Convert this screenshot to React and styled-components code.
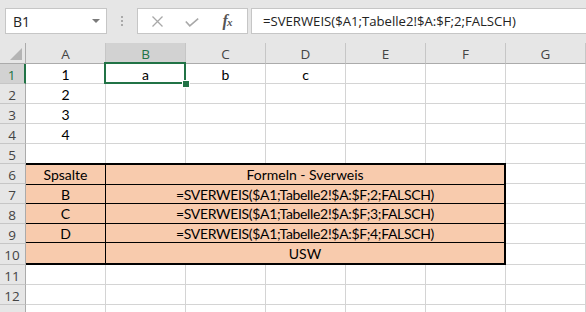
import React from 'react';
import styled, { createGlobalStyle, css } from 'styled-components';

const GlobalStyle = createGlobalStyle`
  html, body { margin: 0; padding: 0; background: #fff; overflow: hidden; }
  body { width: 586px; height: 312px; }
  * { box-sizing: border-box; }
`;

const Window = styled.div`
  width: 586px;
  height: 312px;
  overflow: hidden;
  background: #fff;
`;

const FormulaBar = styled.div`
  height: 43px;
  background: #e6e6e6;
  display: flex;
  align-items: flex-start;
  padding: 8px 0 0 5px;
`;

const NameBox = styled.div`
  width: 102px;
  height: 26px;
  border: 1px solid #c6c6c6;
  background: #fff;
  display: flex;
  align-items: center;
  justify-content: space-between;
  padding: 0 6px 0 7px;
  font-family: "Open Sans", "Noto Sans", sans-serif;
  font-size: 14px;
  color: #222;
`;

const DropArrow = styled.span`
  width: 0;
  height: 0;
  border-left: 4px solid transparent;
  border-right: 4px solid transparent;
  border-top: 4px solid #7a7a7a;
`;

const Grip = styled.div`
  width: 30px;
  height: 26px;
  display: flex;
  flex-direction: column;
  align-items: center;
  justify-content: center;
  gap: 2px;
`;

const GripDot = styled.span`
  width: 2px;
  height: 2px;
  background: #aaaaaa;
`;

const FxBox = styled.div`
  width: 111px;
  height: 26px;
  border: 1px solid #c6c6c6;
  background: #fff;
  display: flex;
  align-items: center;
  padding-left: 9px;
  gap: 15px;
`;

const IconSlot = styled.span`
  width: 20px;
  height: 24px;
  display: flex;
  align-items: center;
  justify-content: center;
  padding-top: ${(p) => p.$drop || 0}px;
`;

const Fx = styled.span`
  font-family: "Liberation Serif", serif;
  font-style: italic;
  font-weight: bold;
  color: #555;
  font-size: 16px;
  letter-spacing: -1px;
  & small { font-size: 11px; }
`;

const FormulaInput = styled.div`
  flex: 1;
  height: 26px;
  margin-left: 3px;
  margin-right: -2px;
  border: 1px solid #c6c6c6;
  background: #fff;
  padding-left: 11px;
  display: flex;
  align-items: center;
  font-family: "Open Sans", "Noto Sans", sans-serif;
  font-size: 13.15px;
  color: #222;
  white-space: nowrap;
`;

const Sheet = styled.div`
  display: grid;
  grid-template-columns: 26px repeat(7, 80px);
  grid-template-rows: 21px repeat(9, 20px) 21px repeat(3, 20px);
  font-family: "Lato", "Liberation Sans", sans-serif;
`;

const Corner = styled.div`
  background: #e6e6e6;
  border-right: 1px solid #ababab;
  border-bottom: 1px solid #ababab;
  display: flex;
  align-items: flex-end;
  justify-content: flex-end;
  padding: 0 3px 3px 0;
`;

const CornerTriangle = styled.span`
  width: 0;
  height: 0;
  border-left: 12px solid transparent;
  border-bottom: 12px solid #b4b4b4;
`;

const ColHead = styled.div`
  background: #e6e6e6;
  border-right: 1px solid #c6c6c6;
  border-bottom: 1px solid #ababab;
  display: flex;
  align-items: center;
  justify-content: center;
  padding-top: 1px;
  font-family: "Open Sans", "Noto Sans", sans-serif;
  font-size: 13.5px;
  color: #444;
  ${(p) =>
    p.$active &&
    css`
      background: #d2d2d2;
      color: #217346;
    `}
`;

const RowHead = styled.div`
  background: #e6e6e6;
  border-right: 1px solid #ababab;
  border-bottom: 1px solid #c6c6c6;
  display: flex;
  align-items: center;
  justify-content: center;
  padding-top: 2px;
  padding-right: 1px;
  font-family: "Open Sans", "Noto Sans", sans-serif;
  font-size: 13.5px;
  color: #444;
  ${(p) =>
    p.$active &&
    css`
      background: #d2d2d2;
      color: #217346;
      border-right: 2px solid #217346;
    `}
`;

const Cell = styled.div`
  position: relative;
  border-right: 1px solid #d4d4d4;
  border-bottom: 1px solid #d4d4d4;
  display: flex;
  align-items: center;
  justify-content: center;
  padding-top: 2px;
  font-size: 14px;
  color: #000;
  ${(p) =>
    p.$selected &&
    css`
      z-index: 2;
      &::after {
        content: '';
        position: absolute;
        top: -2px;
        left: -2px;
        right: -1px;
        bottom: -1px;
        border: 2px solid #217346;
      }
      &::before {
        content: '';
        position: absolute;
        left: 76px;
        top: 16px;
        width: 6px;
        height: 6px;
        background: #217346;
        border: 1px solid #fff;
        z-index: 3;
      }
    `}
`;

const Table = styled.div`
  grid-column: 2 / 8;
  grid-row: 7 / 12;
  margin-top: -1px;
  border-top: 2px solid #000;
  border-bottom: 2px solid #000;
  border-right: 2px solid #000;
  background: #f8cbad;
  display: grid;
  grid-template-columns: 80px 1fr;
  grid-template-rows: repeat(5, 1fr);
  position: relative;
  z-index: 1;
`;

const TCell = styled.div`
  display: flex;
  align-items: center;
  justify-content: center;
  padding-top: 1px;
  font-size: 14px;
  letter-spacing: ${(p) => (p.$formula ? '-0.33px' : '0')};
  color: #000;
  white-space: nowrap;
  border-bottom: ${(p) => (p.$last ? 'none' : '1px solid #000')};
  border-right: ${(p) => (p.$first ? '1px solid #000' : 'none')};
`;

const COLS = ['A', 'B', 'C', 'D', 'E', 'F', 'G'];

const topRows = [
  ['1', 'a', 'b', 'c', '', '', ''],
  ['2', '', '', '', '', '', ''],
  ['3', '', '', '', '', '', ''],
  ['4', '', '', '', '', '', ''],
  ['', '', '', '', '', '', ''],
];

const tableRows = [
  ['Spsalte', 'Formeln - Sverweis'],
  ['B', '=SVERWEIS($A1;Tabelle2!$A:$F;2;FALSCH)'],
  ['C', '=SVERWEIS($A1;Tabelle2!$A:$F;3;FALSCH)'],
  ['D', '=SVERWEIS($A1;Tabelle2!$A:$F;4;FALSCH)'],
  ['', 'USW'],
];

const XIcon = () => (
  <svg width="11" height="11" viewBox="0 0 11 11">
    <path d="M0.5 0.5 L10.5 10.5 M10.5 0.5 L0.5 10.5" stroke="#a8a8a8" strokeWidth="1.3" fill="none" />
  </svg>
);

const CheckIcon = () => (
  <svg width="14" height="9" viewBox="0 0 14 9">
    <path d="M0.8 3.5 L4.8 7.8 L13.2 0.6" stroke="#a8a8a8" strokeWidth="1.6" fill="none" />
  </svg>
);

export default function App() {
  return (
    <Window>
      <GlobalStyle />
      <FormulaBar>
        <NameBox>
          <span>B1</span>
          <DropArrow />
        </NameBox>
        <Grip>
          <GripDot />
          <GripDot />
          <GripDot />
        </Grip>
        <FxBox>
          <IconSlot><XIcon /></IconSlot>
          <IconSlot $drop={2}><CheckIcon /></IconSlot>
          <IconSlot><Fx>f<small>x</small></Fx></IconSlot>
        </FxBox>
        <FormulaInput>=SVERWEIS($A1;Tabelle2!$A:$F;2;FALSCH)</FormulaInput>
      </FormulaBar>
      <Sheet>
        <Corner><CornerTriangle /></Corner>
        {COLS.map((c) => (
          <ColHead key={c} $active={c === 'B'}>{c}</ColHead>
        ))}
        {topRows.map((row, i) => (
          <React.Fragment key={`r${i}`}>
            <RowHead $active={i === 0}>{i + 1}</RowHead>
            {row.map((v, j) => (
              <Cell key={j} $selected={i === 0 && j === 1}>{v}</Cell>
            ))}
          </React.Fragment>
        ))}
        <Table>
          {tableRows.map((r, i) => (
            <React.Fragment key={`t${i}`}>
              <TCell $first $last={i === tableRows.length - 1}>{r[0]}</TCell>
              <TCell $formula={r[1].startsWith('=')} $last={i === tableRows.length - 1}>{r[1]}</TCell>
            </React.Fragment>
          ))}
        </Table>
        {tableRows.map((_, i) => (
          <React.Fragment key={`g${i}`}>
            <RowHead style={{ gridRow: i + 7, gridColumn: 1 }}>{i + 6}</RowHead>
            <Cell style={{ gridRow: i + 7, gridColumn: 8 }} />
          </React.Fragment>
        ))}
        {[11, 12, 13].map((n) => (
          <React.Fragment key={`b${n}`}>
            <RowHead>{n < 13 ? n : ''}</RowHead>
            {COLS.map((c) => (
              <Cell key={c} />
            ))}
          </React.Fragment>
        ))}
      </Sheet>
    </Window>
  );
}
